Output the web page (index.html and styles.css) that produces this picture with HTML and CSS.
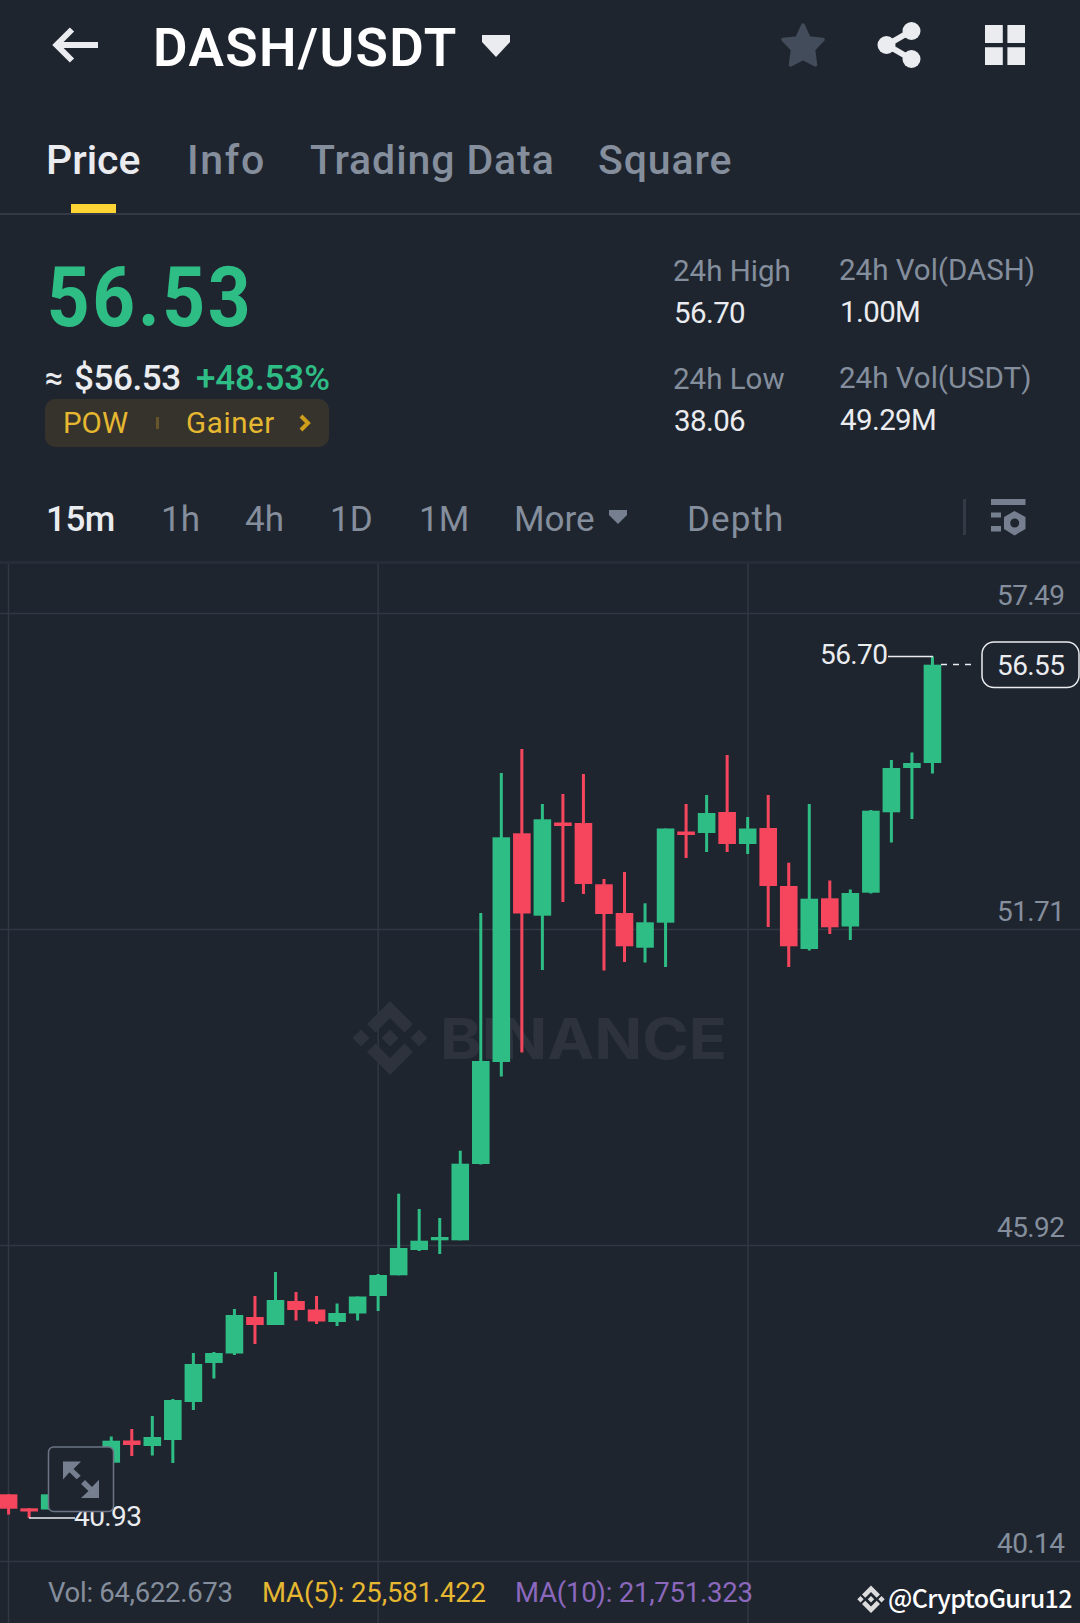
FILE: index.html
```html
<!DOCTYPE html>
<html lang="en">
<head>
    <meta charset="UTF-8">
    <meta name="viewport" content="width=device-width, initial-scale=1.0">
    <title>DASH/USDT</title>
    <link rel="stylesheet" href="styles.css">
</head>
<body>
    <header class="header">
        <svg class="back" width="48" height="40" viewBox="0 0 48 40">
            <path d="M47 20H6M21 4.500L5.500 20l15.500 15.500" fill="none" stroke="#eaecef" stroke-width="6"/>
        </svg>
        <h1 class="pair">DASH/USDT</h1>
        <svg class="caret" width="28" height="22" viewBox="0 0 28 22">
            <path d="M0 0h28v7L14 22 0 7z" fill="#eaecef"/>
        </svg>
        <div class="actions">
            <svg width="46" height="48" viewBox="0 0 46 48">
                <path d="M23 4l6 13 14 1.500-9.500 10 2 15.500L23 37.500 10.500 44l2-15.500L3 18.500 17 17z" fill="#434c5a" stroke="#434c5a" stroke-width="3.500" stroke-linejoin="round"/>
            </svg>
            <svg width="44" height="48" viewBox="0 0 44 48">
                <path d="M34 10L10 24l24 14" fill="none" stroke="#eaecef" stroke-width="6"/>
                <circle cx="34.500" cy="10" r="9" fill="#eaecef"/>
                <circle cx="9.500" cy="24" r="9" fill="#eaecef"/>
                <circle cx="34.500" cy="38" r="9" fill="#eaecef"/>
            </svg>
            <svg width="40" height="40" viewBox="0 0 40 40">
                <path d="M0 0h17.800v18H0zM22.400 0H40v18H22.400zM0 22.300h17.800V40H0zM22.400 22.300H40V40H22.400z" fill="#eaecef"/>
            </svg>
        </div>
    </header>

    <nav class="tabs">
        <a class="tab active">Price</a>
        <a class="tab tab-info">Info</a>
        <a class="tab tab-wide">Trading Data</a>
        <a class="tab tab-wide">Square</a>
    </nav>

    <section class="summary">
        <div class="quote">
            <div class="price">56.53</div>
            <div class="fiat">
                <span class="approx">≈</span>
                <span class="usd">$56.53</span>
                <span class="change">+48.53%</span>
            </div>
            <div class="tags">
                <span>POW</span>
                <i class="tag-sep"></i>
                <span class="gainer">Gainer</span>
                <svg width="12" height="18" viewBox="0 0 12 18">
                    <path d="M2 2l7 7-7 7" fill="none" stroke="#cf9d1c" stroke-width="4"/>
                </svg>
            </div>
        </div>
        <dl class="stats">
            <div class="stat"><dt>24h High</dt><dd>56.70</dd></div>
            <div class="stat"><dt>24h Low</dt><dd>38.06</dd></div>
        </dl>
        <dl class="stats stats-vol">
            <div class="stat"><dt>24h Vol(DASH)</dt><dd>1.00M</dd></div>
            <div class="stat"><dt>24h Vol(USDT)</dt><dd>49.29M</dd></div>
        </dl>
    </section>

    <nav class="periods">
        <a class="period active">15m</a>
        <a class="period">1h</a>
        <a class="period">4h</a>
        <a class="period">1D</a>
        <a class="period">1M</a>
        <a class="period">More</a>
        <svg class="more-caret" width="18" height="14" viewBox="0 0 18 14">
            <path d="M0 0h18v5L9 14 0 5z" fill="#767f8f"/>
        </svg>
        <a class="period depth">Depth</a>
        <i class="divider"></i>
        <svg width="36" height="38" viewBox="0 0 36 38">
            <path d="M0 1h34.500v6H0zM0 14.500h10v5H0zM0 28h10v5.500H0z" fill="#767f8f"/>
            <path d="M23.500 13L34.500 19v12l-11 6.500L13 31V19z" fill="#767f8f"/>
            <circle cx="23.700" cy="25" r="4.500" fill="#1f252f"/>
        </svg>
    </nav>

    <main class="chart">
        <svg width="1080" height="1059" viewBox="0 564 1080 1059">
            <path class="grid" d="M8.500 564V1623M378.200 564V1623M748 564V1623M0 613.500H1080M0 929.500H1080M0 1245.500H1080M0 1561.500H1080"/>

            <g class="watermark">
                <path d="M390 1001l23 23-8.500 8.500L390 1018l-14.500 14.500-8.500-8.500z"/>
                <path d="M390 1075l23-23-8.500-8.500L390 1058l-14.500-14.500-8.500 8.500z"/>
                <path d="M390 1029.500l8.500 8.500-8.500 8.500-8.500-8.500zM361 1029.500l8.500 8.500-8.500 8.500-8.500-8.500zM419 1029.500l8.500 8.500-8.500 8.500-8.500-8.500z"/>
                <text x="440" y="1059" textLength="287" lengthAdjust="spacingAndGlyphs">BINANCE</text>
            </g>

            <g id="candles"></g>

            <path class="marker" d="M888 656.500h45M29 1518h46"/>
            <path class="marker" d="M941 664.500h31" stroke-dasharray="6 6"/>
            <text class="label" x="820" y="664">56.70</text>
            <text class="label" x="74" y="1526">40.93</text>

            <text class="axis" x="997" y="605">57.49</text>
            <text class="axis" x="997" y="921">51.71</text>
            <text class="axis" x="997" y="1237">45.92</text>
            <text class="axis" x="997" y="1553">40.14</text>

            <rect class="last-box" x="982" y="642" width="97" height="45.500" rx="12"/>
            <text class="label" x="997" y="675">56.55</text>

            <rect class="expand-box" x="48.500" y="1447" width="65" height="64.500" rx="5"/>
            <path class="expand-icon" d="M63 1461.500h18l-7.500 7.500 7.200 6.700-4 3.600-7.200-7-6.500 7.200zM99 1498H81l7.500-7-7.500-7 4-4 7 7 7-7.300z"/>

            <text class="legend" x="48" y="1602" textLength="185">Vol: 64,622.673</text>
            <text class="legend ma5" x="262" y="1602" textLength="224">MA(5): 25,581.422</text>
            <text class="legend ma10" x="515" y="1602" textLength="238">MA(10): 21,751.323</text>

            <g class="credit">
                <path d="M871 1585.500l9 9-3.300 3.300-5.700-5.700-5.700 5.700-3.300-3.300zM871 1613l9-9-3.300-3.300-5.700 5.700-5.700-5.700-3.300 3.300zM871 1596l3.200 3.200-3.200 3.200-3.200-3.200zM860.500 1596l3.200 3.200-3.200 3.200-3.200-3.200zM881.500 1596l3.200 3.200-3.200 3.200-3.200-3.200z"/>
                <text x="888" y="1608" textLength="184.500">@CryptoGuru12</text>
            </g>
        </svg>
    </main>

    <script>
        // [slot, body top, body bottom, wick top, wick bottom, direction]
        var candles = [
            [0, 1494.3, 1508.7, 1494.3, 1514.5, 'down'],
            [1, 1508.3, 1511.5, 1508.3, 1518, 'down'],
            [2, 1494.3, 1509.5, 1494.3, 1509.5, 'up'],
            [5, 1440.7, 1462.7, 1436.5, 1462.7, 'up'],
            [6, 1440.5, 1445, 1429, 1456, 'down'],
            [7, 1437, 1446, 1416, 1455.5, 'up'],
            [8, 1400, 1440, 1399, 1463, 'up'],
            [9, 1364, 1402, 1353, 1410, 'up'],
            [10, 1353, 1363, 1352, 1378.5, 'up'],
            [11, 1315, 1353.5, 1309, 1355, 'up'],
            [12, 1317, 1325, 1296, 1344, 'down'],
            [13, 1300, 1325, 1272, 1325, 'up'],
            [14, 1301, 1310, 1292, 1320.5, 'down'],
            [15, 1309.5, 1321.5, 1296, 1324, 'down'],
            [16, 1313, 1322, 1303.5, 1326, 'up'],
            [17, 1296.5, 1313.5, 1296.5, 1320.5, 'up'],
            [18, 1275, 1296, 1274, 1311, 'up'],
            [19, 1248, 1275.3, 1193.7, 1275.3, 'up'],
            [20, 1240.7, 1250, 1209, 1251, 'up'],
            [21, 1237, 1240.3, 1218, 1254, 'up'],
            [22, 1163.7, 1240.3, 1150.7, 1240.3, 'up'],
            [23, 1061, 1164, 913, 1164.5, 'up'],
            [24, 837.3, 1062, 773, 1076.5, 'up'],
            [25, 833.3, 913.5, 749, 1052.5, 'down'],
            [26, 819.3, 915.7, 804, 970, 'up'],
            [27, 822.5, 826, 794, 902, 'down'],
            [28, 823, 884, 774, 894, 'down'],
            [29, 884.3, 914, 879, 970.5, 'down'],
            [30, 913, 946.3, 872, 962, 'down'],
            [31, 922.3, 947.7, 903.3, 962.5, 'up'],
            [32, 828.5, 922.7, 828.5, 967, 'up'],
            [33, 831.5, 835, 804, 858, 'down'],
            [34, 813, 833, 795, 852, 'up'],
            [35, 812, 844, 755, 852, 'down'],
            [36, 828.5, 844, 817, 854, 'up'],
            [37, 828, 886, 795, 927, 'down'],
            [38, 886, 946.3, 862.7, 967, 'down'],
            [39, 898.7, 949, 804, 950.5, 'up'],
            [40, 898.3, 927.3, 880.5, 934, 'down'],
            [41, 893, 926.5, 889.5, 940, 'up'],
            [42, 810.7, 892.7, 810, 893.5, 'up'],
            [43, 768, 812.3, 760, 842.5, 'up'],
            [44, 763, 768, 752.5, 819, 'up'],
            [45, 664.7, 763, 656.5, 773.5, 'up']
        ];

        var svg = '';
        candles.forEach(function (c) {
            var x = 8.6 + c[0] * 20.53;
            svg += '<rect class="' + c[5] + '" x="' + (x - 8.8) + '" y="' + c[1] + '" width="17.6" height="' + (c[2] - c[1]) + '"/>';
            svg += '<rect class="' + c[5] + '" x="' + (x - 1.5) + '" y="' + c[3] + '" width="3" height="' + (c[4] - c[3]) + '"/>';
        });
        document.getElementById('candles').innerHTML = svg;
    </script>
</body>
</html>
```
FILE: styles.css
```css
* {
    box-sizing: border-box;
}
body {
    margin: 0;
    width: 1080px;
    height: 1623px;
    overflow: hidden;
    background-color: #1f252f;
    color: #eaecef;
    font-family: Roboto, "Liberation Sans", sans-serif;
}
svg {
    display: block;
    flex: none;
}

/* header */
.header {
    display: flex;
    align-items: center;
    height: 90px;
    padding: 0 55px 0 51px;
}
.pair {
    margin: 5px 0 0 54px;
    width: 326px;
    color: #fff;
    font-size: 53px;
    font-weight: 600;
    line-height: 60px;
    letter-spacing: 1.4px;
}
.caret {
    margin-left: 3px;
    margin-top: 1px;
}
.actions {
    display: flex;
    align-items: center;
    margin-left: auto;
}
.actions svg + svg {
    margin-left: 51px;
}
.actions svg:last-child {
    margin-left: 64px;
}

/* top tabs */
.tabs {
    display: grid;
    grid-template-columns: 141px 123px 288px 200px;
    height: 125px;
    padding: 40px 0 0 46px;
    border-bottom: 2px solid #343a45;
}
.tab {
    position: relative;
    color: #848e9c;
    font-size: 41px;
    font-weight: 500;
    line-height: 60px;
}
.tab-info {
    letter-spacing: 1.7px;
}
.tab-wide {
    letter-spacing: 0.9px;
}
.tab.active {
    color: #eaecef;
}
.tab.active::after {
    content: "";
    position: absolute;
    left: 25px;
    bottom: 0;
    width: 45px;
    height: 9px;
    background-color: #fcd535;
}

/* price and 24h numbers */
.summary {
    display: flex;
    height: 269px;
    padding-left: 45px;
}
.quote {
    width: 628px;
    padding-top: 38px;
}
.price {
    height: 90px;
    color: #2ebd85;
    font-size: 84px;
    font-weight: 700;
    line-height: 90px;
    letter-spacing: 3px;
    transform: scaleX(0.89);
    transform-origin: left;
    padding-left: 2px;
}
.fiat {
    display: flex;
    height: 56px;
    font-size: 35px;
    font-weight: 500;
    line-height: 71px;
}
.approx {
    width: 29px;
    font-size: 32px;
}
.usd {
    width: 122px;
    letter-spacing: -0.4px;
}
.change {
    color: #2ebd85;
    letter-spacing: -0.1px;
}
.tags {
    display: flex;
    align-items: center;
    width: 284px;
    height: 48px;
    padding-left: 18px;
    border-radius: 10px;
    background-color: #35332b;
    color: #e6b730;
    font-size: 29.500px;
}
.tags svg {
    margin-left: auto;
    margin-right: 18px;
}
.tag-sep {
    width: 3px;
    height: 12px;
    margin: 0 27px 0 28px;
    background-color: #66552a;
}
.gainer {
    letter-spacing: 0.6px;
}
.stats {
    width: 166px;
    margin: 0;
    padding-top: 35px;
}
.stats-vol {
    width: 230px;
    padding-top: 34px;
}
.stat {
    height: 108px;
    font-size: 29.500px;
    line-height: 42px;
}
.stat dt {
    color: #848e9c;
    white-space: nowrap;
}
.stat dd {
    margin: 0;
    padding-left: 1px;
    letter-spacing: -0.6px;
}

/* intervals */
.periods {
    display: grid;
    grid-template-columns: 115px 84px 85px 89px 95px 95px 78px 276px 28px 36px;
    align-items: center;
    height: 80px;
    padding: 0 0 11px 46px;
    border-bottom: 3px solid #272d38;
}
.period {
    padding-top: 6px;
    color: #848e9c;
    font-size: 35px;
    line-height: 60px;
}
.period.active {
    color: #eaecef;
    font-weight: 500;
    letter-spacing: -0.5px;
}
.depth {
    letter-spacing: 1.1px;
}
.divider {
    width: 3px;
    height: 36px;
    background-color: #343a45;
}

/* chart */
.chart {
    height: 1059px;
}
.grid {
    fill: none;
    stroke: #323843;
    stroke-width: 1.500;
}
.watermark {
    fill: #2d323d;
}
.watermark text {
    font-family: Inter, sans-serif;
    font-size: 57px;
    font-weight: 700;
}
.up {
    fill: #2ebd85;
}
.down {
    fill: #f6465d;
}
.marker {
    fill: none;
    stroke: #eaecef;
    stroke-width: 1.500;
}
.label, .axis {
    font-size: 28px;
    letter-spacing: -0.6px;
    fill: #eaecef;
}
.axis {
    fill: #848e9c;
}
.last-box {
    fill: #1f252f;
    stroke: #eaecef;
    stroke-width: 1.500;
}
.expand-box {
    fill: #1f252f;
    stroke: #6b7484;
    stroke-width: 1.500;
}
.expand-icon {
    fill: #767f8f;
}
.legend {
    font-size: 27.500px;
    fill: #848e9c;
}
.ma5 {
    fill: #e6b730;
}
.ma10 {
    fill: #8b68bd;
}
.credit {
    fill: #dcdcdc;
}
.credit text {
    fill: #fff;
    font-family: "Noto Sans CJK SC", "Noto Sans", sans-serif;
    font-size: 25px;
    font-weight: 500;
}
```
